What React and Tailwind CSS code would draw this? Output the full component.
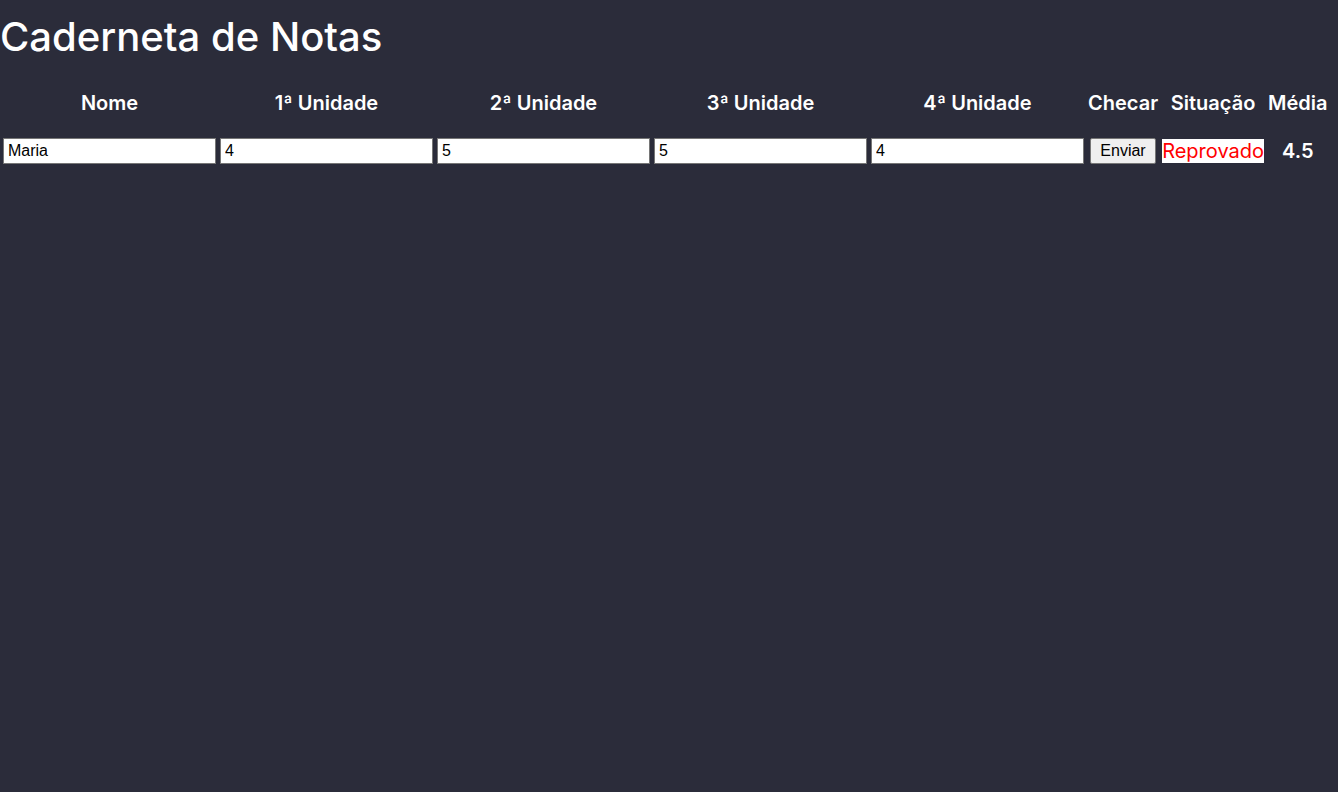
import React from 'react';

const unidades = ['1ª Unidade', '2ª Unidade', '3ª Unidade', '4ª Unidade'];

const inputClass =
  "block w-[213px] h-[26px] bg-white text-black border border-[#767676] px-[4px] text-[16px] font-['Liberation_Sans',Arial,sans-serif]";

function App() {
  const notas = ['4', '5', '5', '4'];
  const media = notas.reduce((s, n) => s + Number(n), 0) / notas.length;

  return (
    <div className="bg-[#2b2c3a] text-white min-h-screen font-['Inter',sans-serif]">
      {/* Title */}
      <h1 className="text-[40px] leading-[74px] font-medium">Caderneta de Notas</h1>

      {/* Grades table */}
      <table className="border-separate border-spacing-[2px] text-[20px]">
        <thead>
          <tr>
            <th className="font-semibold h-[54px] px-[1px]">Nome</th>
            {unidades.map((u) => (
              <th key={u} className="font-semibold px-[1px]">{u}</th>
            ))}
            <th className="font-semibold px-[1px]">Checar</th>
            <th className="font-semibold px-[1px]">Situação</th>
            <th className="font-semibold px-[1px]">Média</th>
          </tr>
        </thead>
        <tbody>
          <tr className="h-[38px]">
            <td className="p-[1px] align-middle">
              <input defaultValue="Maria" className={inputClass} />
            </td>
            {notas.map((n, i) => (
              <td key={i} className="p-[1px] align-middle">
                <input defaultValue={n} className={inputClass} />
              </td>
            ))}
            <td className="p-[1px] align-middle">
              <button className="block mx-auto w-[66px] h-[26px] bg-[#efefef] text-black border border-[#767676] rounded-[2px] text-[16px] font-['Liberation_Sans',Arial,sans-serif]">
                Enviar
              </button>
            </td>
            <td className="p-[1px] align-middle text-center">
              <span className="block mx-auto bg-white text-[#ff0000] leading-[24px] w-[102px]">
                {media >= 7 ? 'Aprovado' : 'Reprovado'}
              </span>
            </td>
            <td className="p-[1px] align-middle text-center font-semibold">{media}</td>
          </tr>
        </tbody>
      </table>
    </div>
  );
}

export default App;
